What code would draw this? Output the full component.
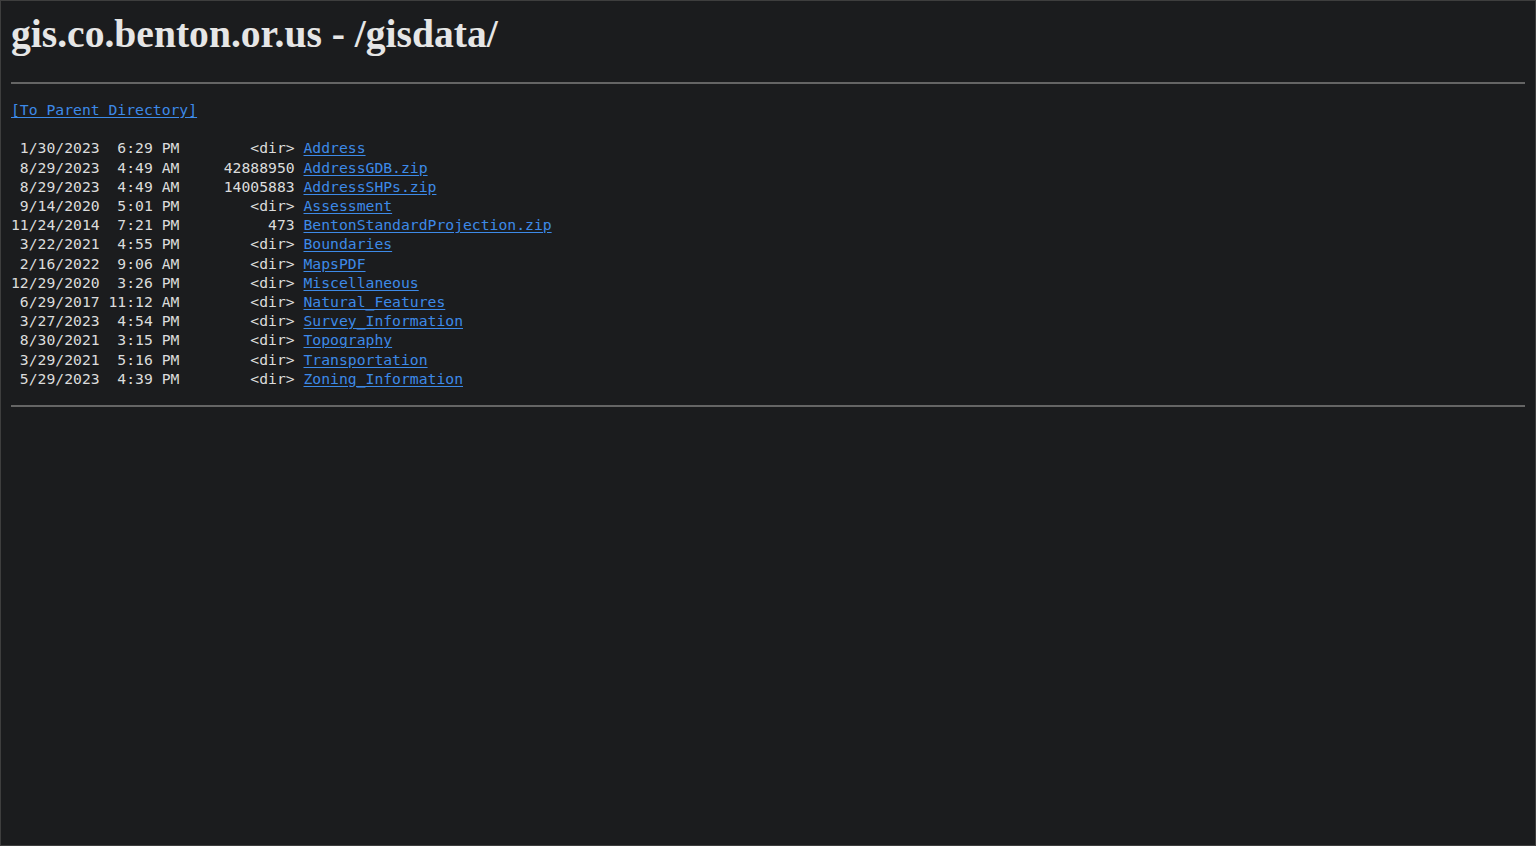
const rows = [
  { date: "1/30/2023", time: "6:29 PM", size: "<dir>", name: "Address" },
  { date: "8/29/2023", time: "4:49 AM", size: "42888950", name: "AddressGDB.zip" },
  { date: "8/29/2023", time: "4:49 AM", size: "14005883", name: "AddressSHPs.zip" },
  { date: "9/14/2020", time: "5:01 PM", size: "<dir>", name: "Assessment" },
  { date: "11/24/2014", time: "7:21 PM", size: "473", name: "BentonStandardProjection.zip" },
  { date: "3/22/2021", time: "4:55 PM", size: "<dir>", name: "Boundaries" },
  { date: "2/16/2022", time: "9:06 AM", size: "<dir>", name: "MapsPDF" },
  { date: "12/29/2020", time: "3:26 PM", size: "<dir>", name: "Miscellaneous" },
  { date: "6/29/2017", time: "11:12 AM", size: "<dir>", name: "Natural_Features" },
  { date: "3/27/2023", time: "4:54 PM", size: "<dir>", name: "Survey_Information" },
  { date: "8/30/2021", time: "3:15 PM", size: "<dir>", name: "Topography" },
  { date: "3/29/2021", time: "5:16 PM", size: "<dir>", name: "Transportation" },
  { date: "5/29/2023", time: "4:39 PM", size: "<dir>", name: "Zoning_Information" },
];

const linkClass = "text-[#3d8ae8] underline underline-offset-2";

export default function App() {
  return (
    <div className="h-[846px] w-full overflow-hidden border border-[#3e3e3e] bg-[#1b1c1e] px-[10px] text-[#dcdcdc]">
      {/* Heading */}
      <h1 className="pt-[11px] font-['Liberation_Serif',serif] text-[39.6px] font-bold leading-[45px] text-[#e6e6e6]">
        gis.co.benton.or.us - /gisdata/
      </h1>

      <div className="mt-[25px] h-[2px] bg-[#656565]" />

      {/* Listing */}
      <pre className="mt-[16px] mb-[17px] whitespace-pre font-['DejaVu_Sans_Mono',monospace] text-[14.72px] leading-[19.2px]">
        <a href="#" className={linkClass}>[To Parent Directory]</a>
        {"\n\n"}
        {rows.map((r) => (
          <span key={r.name}>
            {r.date.padStart(10, " ")} {r.time.padStart(8, " ")} {r.size.padStart(12, " ")}{" "}
            <a href="#" className={linkClass}>{r.name}</a>
            {"\n"}
          </span>
        ))}
      </pre>

      <div className="h-[2px] bg-[#656565]" />
    </div>
  );
}
